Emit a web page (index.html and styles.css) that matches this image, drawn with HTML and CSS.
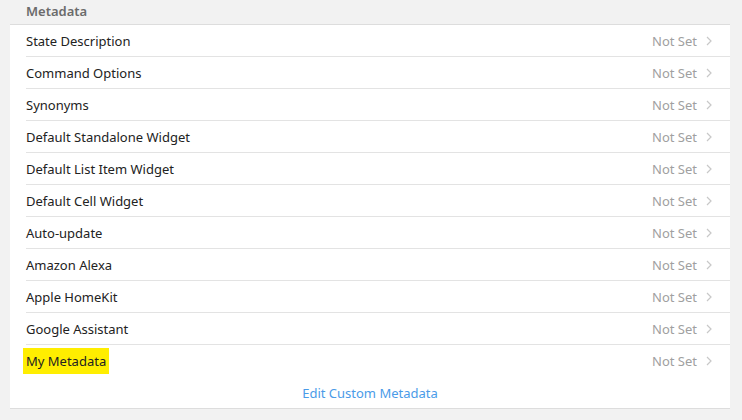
FILE: index.html
```html
<!DOCTYPE html>
<html>
<head>
    <link rel="stylesheet" href="styles.css">
</head>
<body>

    <div class="section_title">Metadata</div>

    <div class="panel">
        <div class="row"><span class="label">State Description</span><span class="value">Not Set</span><svg class="chevron" width="6" height="10" viewBox="0 0 6 10"><path d="M1 1 L5 5 L1 9"/></svg></div>
        <div class="row"><span class="label">Command Options</span><span class="value">Not Set</span><svg class="chevron" width="6" height="10" viewBox="0 0 6 10"><path d="M1 1 L5 5 L1 9"/></svg></div>
        <div class="row"><span class="label">Synonyms</span><span class="value">Not Set</span><svg class="chevron" width="6" height="10" viewBox="0 0 6 10"><path d="M1 1 L5 5 L1 9"/></svg></div>
        <div class="row"><span class="label">Default Standalone Widget</span><span class="value">Not Set</span><svg class="chevron" width="6" height="10" viewBox="0 0 6 10"><path d="M1 1 L5 5 L1 9"/></svg></div>
        <div class="row"><span class="label">Default List Item Widget</span><span class="value">Not Set</span><svg class="chevron" width="6" height="10" viewBox="0 0 6 10"><path d="M1 1 L5 5 L1 9"/></svg></div>
        <div class="row"><span class="label">Default Cell Widget</span><span class="value">Not Set</span><svg class="chevron" width="6" height="10" viewBox="0 0 6 10"><path d="M1 1 L5 5 L1 9"/></svg></div>
        <div class="row"><span class="label">Auto-update</span><span class="value">Not Set</span><svg class="chevron" width="6" height="10" viewBox="0 0 6 10"><path d="M1 1 L5 5 L1 9"/></svg></div>
        <div class="row"><span class="label">Amazon Alexa</span><span class="value">Not Set</span><svg class="chevron" width="6" height="10" viewBox="0 0 6 10"><path d="M1 1 L5 5 L1 9"/></svg></div>
        <div class="row"><span class="label">Apple HomeKit</span><span class="value">Not Set</span><svg class="chevron" width="6" height="10" viewBox="0 0 6 10"><path d="M1 1 L5 5 L1 9"/></svg></div>
        <div class="row"><span class="label">Google Assistant</span><span class="value">Not Set</span><svg class="chevron" width="6" height="10" viewBox="0 0 6 10"><path d="M1 1 L5 5 L1 9"/></svg></div>
        <div class="row last"><span class="label"><span class="highlight">My Metadata</span></span><span class="value">Not Set</span><svg class="chevron" width="6" height="10" viewBox="0 0 6 10"><path d="M1 1 L5 5 L1 9"/></svg></div>
        <div class="footer"><a href="#" class="edit_link">Edit Custom Metadata</a></div>
    </div>

</body>
</html>
```

FILE: styles.css
```css
/*Page.*/
body {
    margin: 0;
    background-color: #f2f2f2;
    font-family: "Noto Sans", "Open Sans", sans-serif;
    font-size: 13px;
    color: #222222;
}

.section_title {
    height: 24px;
    line-height: 22px;
    padding-left: 26px;
    color: #6b6b6b;
    font-weight: 600;
}

/*List panel.*/
.panel {
    width: 720px;
    margin-left: 10px;
    background-color: #ffffff;
    border-top: 1px solid #dddddd;
    border-bottom: 1px solid #dddddd;
    box-sizing: border-box;
}

.row {
    display: flex;
    align-items: center;
    height: 32px;
    margin-left: 16px;
    padding-right: 18px;
    border-bottom: 1px solid #e3e3e3;
    box-sizing: border-box;
}

.row.last {
    border-bottom: none;
}

.label {
    flex: 1;
}

.highlight {
    background-color: #ffee00;
    margin-left: -3px;
    padding: 4px 3px;
}

.value {
    color: #a0a0a0;
}

/*Arrow drawn as a thin open chevron.*/
.chevron {
    margin-left: 9px;
    fill: none;
    stroke: #c8c8c8;
    stroke-width: 1.2;
}

.footer {
    height: 31px;
    display: flex;
    align-items: center;
    justify-content: center;
}

.edit_link {
    color: #4a9be8;
    text-decoration: none;
}
```
